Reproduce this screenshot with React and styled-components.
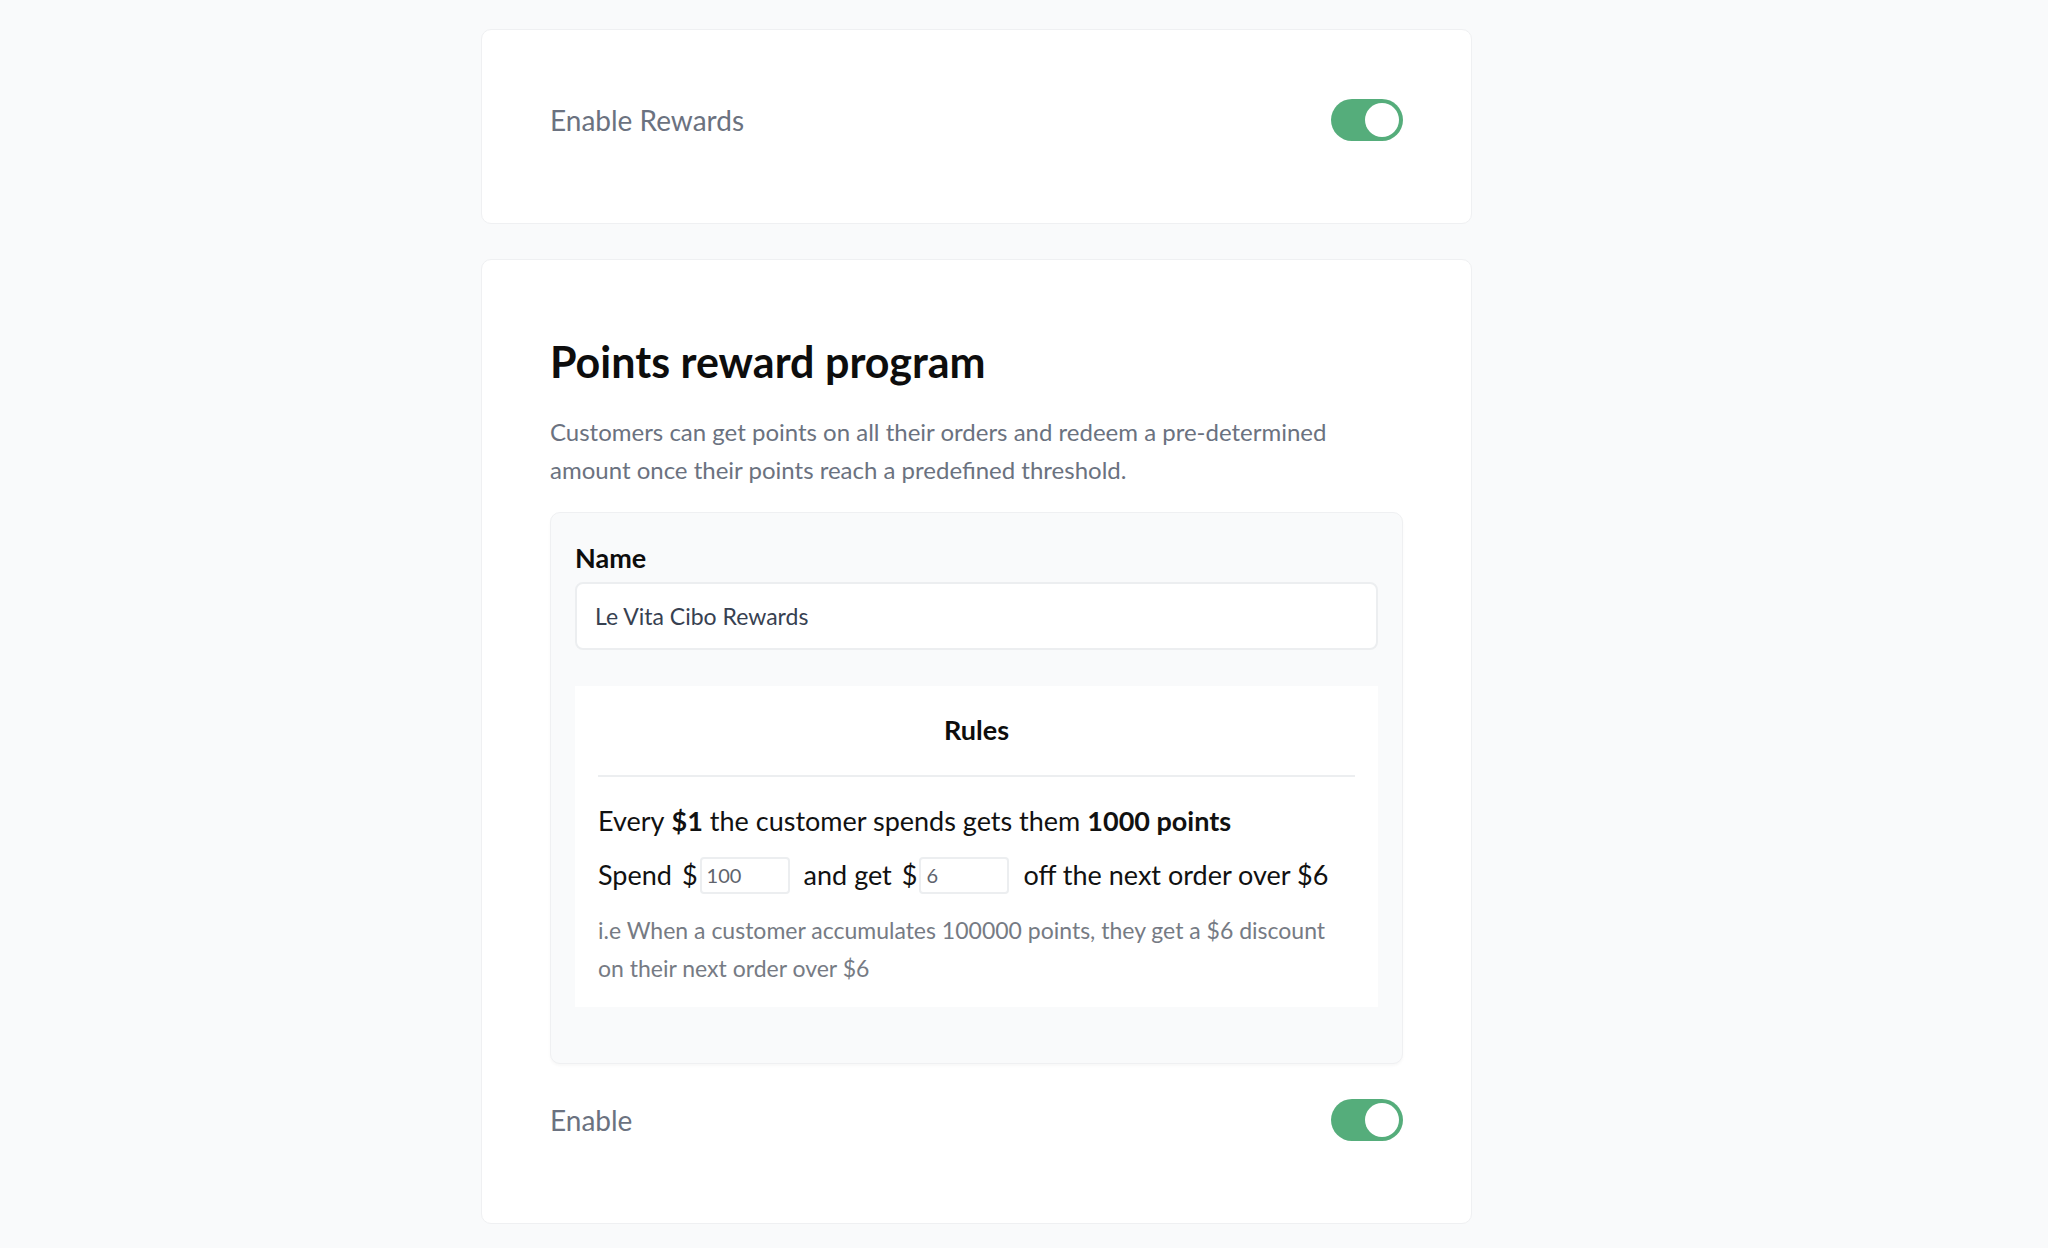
import React from "react";
import styled, { createGlobalStyle } from "styled-components";

const GlobalStyle = createGlobalStyle`
  body {
    margin: 0;
    background: #f9fafb;
    font-family: Lato, "Open Sans", sans-serif;
    color: #111;
  }
`;

const Page = styled.div`
  padding: 29px 0 26px 481px;
  display: flex;
  flex-direction: column;
  gap: 35px;
`;

const Card = styled.section`
  width: 991px;
  box-sizing: border-box;
  background: #fff;
  border: 1px solid #eff0f2;
  border-radius: 10px;
  padding: 0 68px;
`;

const ToggleRow = styled.div`
  display: flex;
  align-items: center;
  justify-content: space-between;
  padding: ${props => props.top}px 0 82px;
`;

const RowLabel = styled.span`
  font-size: 28px;
  line-height: 42px;
  color: #6b7280;
`;

const Toggle = styled.button`
  position: relative;
  width: 72px;
  height: 42px;
  border: none;
  border-radius: 21px;
  background: #55ad7b;
  padding: 0;
  cursor: pointer;

  &::after {
    content: "";
    position: absolute;
    top: 4px;
    right: 4px;
    width: 34px;
    height: 34px;
    border-radius: 50%;
    background: #fff;
  }
`;

const Title = styled.h1`
  margin: 78px 0 0;
  font-size: 43px;
  font-weight: 700;
  line-height: 48px;
  color: #0d0d0d;
`;

const Description = styled.p`
  margin: 27px 0 0;
  font-size: 24px;
  line-height: 38px;
  color: #6b7280;
  max-width: 820px;
`;

const Panel = styled.div`
  margin-top: 23px;
  background: #f9fafb;
  border: 1px solid #eff0f2;
  border-radius: 10px;
  box-shadow: 0 2px 3px rgba(0, 0, 0, 0.03);
  padding: 30px 24px 56px;
`;

const FieldLabel = styled.label`
  display: block;
  font-size: 27px;
  font-weight: 700;
  line-height: 30px;
  color: #0d0d0d;
`;

const TextInput = styled.input`
  display: block;
  box-sizing: border-box;
  width: 100%;
  height: 68px;
  margin-top: 9px;
  padding: 0 18px;
  border: 2px solid #eceef0;
  border-radius: 8px;
  background: #fff;
  font-family: inherit;
  font-size: 23px;
  color: #374151;
  outline: none;
`;

const Rules = styled.div`
  margin-top: 36px;
  background: #fff;
  padding: 0 23px 20px;
`;

const RulesTitle = styled.h2`
  margin: 0;
  padding: 21px 0 22px;
  text-align: center;
  font-size: 27px;
  font-weight: 700;
  line-height: 46px;
  color: #0d0d0d;
  border-bottom: 2px solid #eceef0;
`;

const RuleLine = styled.p`
  margin: ${props => props.top}px 0 0;
  display: flex;
  align-items: center;
  font-size: 27px;
  line-height: 40px;
  color: #111;

  b {
    font-weight: 700;
    margin: 0 7px;
  }
`;

const Amount = styled.input`
  box-sizing: border-box;
  width: 90px;
  height: 37px;
  margin: 0 14px 0 2px;
  padding: 0 5px;
  border: 2px solid #eceef0;
  border-radius: 4px;
  font-family: inherit;
  font-size: 20px;
  color: #5f646d;
  outline: none;
`;

const Word = styled.span`
  margin-right: ${props => props.gap || 0}px;
`;

const Note = styled.p`
  margin: 16px 0 0;
  font-size: 23px;
  line-height: 38px;
  color: #767b84;
`;

export default function App() {
  return (
    <>
      <GlobalStyle />
      <Page>
        <Card>
          <ToggleRow top={69}>
            <RowLabel>Enable Rewards</RowLabel>
            <Toggle aria-label="Enable Rewards" />
          </ToggleRow>
        </Card>
        <Card>
          <Title>Points reward program</Title>
          <Description>
            Customers can get points on all their orders and redeem a pre-determined
            amount once their points reach a predefined threshold.
          </Description>
          <Panel>
            <FieldLabel>Name</FieldLabel>
            <TextInput defaultValue="Le Vita Cibo Rewards" />
            <Rules>
              <RulesTitle>Rules</RulesTitle>
              <RuleLine top={24}>
                Every<b>$1</b>the customer spends gets them<b>1000 points</b>
              </RuleLine>
              <RuleLine top={14}>
                <Word gap={10}>Spend</Word>
                <Word>$</Word>
                <Amount defaultValue="100" />
                <Word gap={10}>and get</Word>
                <Word>$</Word>
                <Amount defaultValue="6" />
                <Word>off the next order over $6</Word>
              </RuleLine>
              <Note>
                i.e When a customer accumulates 100000 points, they get a $6 discount
                on their next order over $6
              </Note>
            </Rules>
          </Panel>
          <ToggleRow top={35}>
            <RowLabel>Enable</RowLabel>
            <Toggle aria-label="Enable" />
          </ToggleRow>
        </Card>
      </Page>
    </>
  );
}
